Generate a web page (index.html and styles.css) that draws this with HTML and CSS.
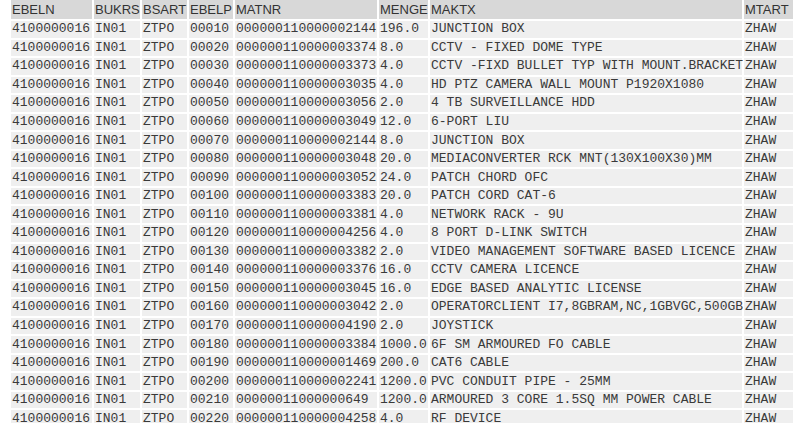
FILE: index.html
```html
<!DOCTYPE html>
<html>
<head>
<meta charset="utf-8">
<link rel="stylesheet" href="styles.css">
</head>
<body>
<table class="grid">
<colgroup>
<col class="c1"><col class="c2"><col class="c3"><col class="c4"><col class="c5"><col class="c6"><col class="c7"><col class="c8">
</colgroup>
<thead>
<tr><th>EBELN</th><th>BUKRS</th><th>BSART</th><th>EBELP</th><th>MATNR</th><th>MENGE</th><th>MAKTX</th><th>MTART</th></tr>
</thead>
<tbody>
<tr><td>4100000016</td><td>IN01</td><td>ZTPO</td><td>00010</td><td>000000110000002144</td><td>196.0</td><td>JUNCTION BOX</td><td>ZHAW</td></tr>
<tr><td>4100000016</td><td>IN01</td><td>ZTPO</td><td>00020</td><td>000000110000003374</td><td>8.0</td><td>CCTV - FIXED DOME TYPE</td><td>ZHAW</td></tr>
<tr><td>4100000016</td><td>IN01</td><td>ZTPO</td><td>00030</td><td>000000110000003373</td><td>4.0</td><td>CCTV -FIXD BULLET TYP WITH MOUNT.BRACKET</td><td>ZHAW</td></tr>
<tr><td>4100000016</td><td>IN01</td><td>ZTPO</td><td>00040</td><td>000000110000003035</td><td>4.0</td><td>HD PTZ CAMERA WALL MOUNT P1920X1080</td><td>ZHAW</td></tr>
<tr><td>4100000016</td><td>IN01</td><td>ZTPO</td><td>00050</td><td>000000110000003056</td><td>2.0</td><td>4 TB SURVEILLANCE HDD</td><td>ZHAW</td></tr>
<tr><td>4100000016</td><td>IN01</td><td>ZTPO</td><td>00060</td><td>000000110000003049</td><td>12.0</td><td>6-PORT LIU</td><td>ZHAW</td></tr>
<tr><td>4100000016</td><td>IN01</td><td>ZTPO</td><td>00070</td><td>000000110000002144</td><td>8.0</td><td>JUNCTION BOX</td><td>ZHAW</td></tr>
<tr><td>4100000016</td><td>IN01</td><td>ZTPO</td><td>00080</td><td>000000110000003048</td><td>20.0</td><td>MEDIACONVERTER RCK MNT(130X100X30)MM</td><td>ZHAW</td></tr>
<tr><td>4100000016</td><td>IN01</td><td>ZTPO</td><td>00090</td><td>000000110000003052</td><td>24.0</td><td>PATCH CHORD OFC</td><td>ZHAW</td></tr>
<tr><td>4100000016</td><td>IN01</td><td>ZTPO</td><td>00100</td><td>000000110000003383</td><td>20.0</td><td>PATCH CORD CAT-6</td><td>ZHAW</td></tr>
<tr><td>4100000016</td><td>IN01</td><td>ZTPO</td><td>00110</td><td>000000110000003381</td><td>4.0</td><td>NETWORK RACK - 9U</td><td>ZHAW</td></tr>
<tr><td>4100000016</td><td>IN01</td><td>ZTPO</td><td>00120</td><td>000000110000004256</td><td>4.0</td><td>8 PORT D-LINK SWITCH</td><td>ZHAW</td></tr>
<tr><td>4100000016</td><td>IN01</td><td>ZTPO</td><td>00130</td><td>000000110000003382</td><td>2.0</td><td>VIDEO MANAGEMENT SOFTWARE BASED LICENCE</td><td>ZHAW</td></tr>
<tr><td>4100000016</td><td>IN01</td><td>ZTPO</td><td>00140</td><td>000000110000003376</td><td>16.0</td><td>CCTV CAMERA LICENCE</td><td>ZHAW</td></tr>
<tr><td>4100000016</td><td>IN01</td><td>ZTPO</td><td>00150</td><td>000000110000003045</td><td>16.0</td><td>EDGE BASED ANALYTIC LICENSE</td><td>ZHAW</td></tr>
<tr><td>4100000016</td><td>IN01</td><td>ZTPO</td><td>00160</td><td>000000110000003042</td><td>2.0</td><td>OPERATORCLIENT I7,8GBRAM,NC,1GBVGC,500GB</td><td>ZHAW</td></tr>
<tr><td>4100000016</td><td>IN01</td><td>ZTPO</td><td>00170</td><td>000000110000004190</td><td>2.0</td><td>JOYSTICK</td><td>ZHAW</td></tr>
<tr><td>4100000016</td><td>IN01</td><td>ZTPO</td><td>00180</td><td>000000110000003384</td><td>1000.0</td><td>6F SM ARMOURED FO CABLE</td><td>ZHAW</td></tr>
<tr><td>4100000016</td><td>IN01</td><td>ZTPO</td><td>00190</td><td>000000110000001469</td><td>200.0</td><td>CAT6 CABLE</td><td>ZHAW</td></tr>
<tr><td>4100000016</td><td>IN01</td><td>ZTPO</td><td>00200</td><td>000000110000002241</td><td>1200.0</td><td>PVC CONDUIT PIPE - 25MM</td><td>ZHAW</td></tr>
<tr><td>4100000016</td><td>IN01</td><td>ZTPO</td><td>00210</td><td>00000011000000649</td><td>1200.0</td><td>ARMOURED 3 CORE 1.5SQ MM POWER CABLE</td><td>ZHAW</td></tr>
<tr><td>4100000016</td><td>IN01</td><td>ZTPO</td><td>00220</td><td>000000110000004258</td><td>4.0</td><td>RF DEVICE</td><td>ZHAW</td></tr>
</tbody>
</table>
</body>
</html>
```
FILE: styles.css
```css
html, body {
  background: #ffffff;
}
body {
  margin: 0 0 0 9px;
  overflow: hidden;
}
.grid {
  table-layout: fixed;
  border-collapse: separate;
  border-spacing: 2px;
  margin-top: -2px;
  width: 786px;
}
.c1 { width: 81px; }
.c2 { width: 46px; }
.c3 { width: 45px; }
.c4 { width: 44px; }
.c5 { width: 142px; }
.c6 { width: 49px; }
.c7 { width: 312px; }
.c8 { width: 49px; }
.grid th,
.grid td {
  padding: 0 1px;
  text-align: left;
  vertical-align: middle;
  white-space: nowrap;
  overflow: visible;
}
.grid th {
  height: 19px;
  background: #d8d8d8;
  color: #333333;
  font-family: "Liberation Sans", Arial, sans-serif;
  font-size: 13px;
  font-weight: normal;
  line-height: 16px;
}
.grid td {
  height: 16.55px;
  background: #efefef;
  color: #3a3a3a;
  font-family: "Liberation Mono", "Courier New", monospace;
  font-size: 13px;
  line-height: 16px;
}
```
